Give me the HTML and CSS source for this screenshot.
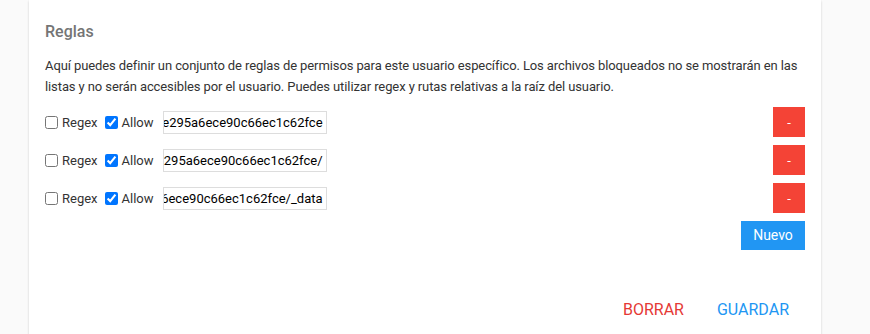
FILE: index.html
```html
<!DOCTYPE html>
<html lang="es">
<head>
<meta charset="utf-8">
<title>Reglas</title>
<link rel="stylesheet" href="styles.css">
</head>
<body>
<div class="page">
  <div class="card">
    <div class="card-content">
      <h3 class="title">Reglas</h3>
      <p class="help">Aquí puedes definir un conjunto de reglas de permisos para este usuario específico. Los archivos bloqueados no se mostrarán en las listas y no serán accesibles por el usuario. Puedes utilizar regex y rutas relativas a la raíz del usuario.</p>
      <div class="rules">
        <div class="rule">
          <input type="checkbox" class="check"><label class="lbl">Regex</label>
          <input type="checkbox" class="check" checked><label class="lbl lbl-allow">Allow</label>
          <div class="field"><span>/users/0f7a2d9b1c4e295a6ece90c66ec1c62fce</span></div>
          <button class="btn btn-red">-</button>
        </div>
        <div class="rule">
          <input type="checkbox" class="check"><label class="lbl">Regex</label>
          <input type="checkbox" class="check" checked><label class="lbl lbl-allow">Allow</label>
          <div class="field"><span>/users/0f7a2d9b1c4e295a6ece90c66ec1c62fce/</span></div>
          <button class="btn btn-red">-</button>
        </div>
        <div class="rule">
          <input type="checkbox" class="check"><label class="lbl">Regex</label>
          <input type="checkbox" class="check" checked><label class="lbl lbl-allow">Allow</label>
          <div class="field"><span>/users/0f7a2d9b1c4e295a6ece90c66ec1c62fce/_data</span></div>
          <button class="btn btn-red">-</button>
        </div>
        <div class="rule">
          <button class="btn btn-blue">Nuevo</button>
        </div>
      </div>
    </div>
    <div class="card-action">
      <button class="flat flat-red">BORRAR</button>
      <button class="flat flat-blue">GUARDAR</button>
    </div>
  </div>
</div>
</body>
</html>
```

FILE: styles.css
```css
html, body {
  margin: 0;
  padding: 0;
  background: #fafafa;
  overflow: hidden;
  height: 334px;
}
body {
  font-family: Roboto, "Liberation Sans", sans-serif;
  color: #333;
}
.page {
  padding: 0 49px 0 29px;
}
.card {
  background: #fff;
  box-shadow: 0 1px 3px rgba(0,0,0,.06), 0 1px 2px rgba(0,0,0,.12);
  min-height: 400px;
}
.card-content {
  padding: 20px 16px 16px;
}
.title {
  margin: 0;
  font-size: 16px;
  font-weight: 500;
  color: #757575;
  line-height: 24px;
}
.help {
  margin: 11px 0 0;
  font-size: 13px;
  letter-spacing: -0.1px;
  line-height: 21px;
}
.rules {
  margin-top: 10px;
  display: flex;
  flex-direction: column;
  gap: 8px;
}
.rule {
  display: flex;
  align-items: center;
  font-size: 13px;
}
.check {
  margin: 0 4px 0 0;
  width: 13px;
  height: 13px;
}
.lbl {
  margin-right: 7px;
}
.lbl-allow {
  margin-right: 9px;
}
.field {
  width: 156px;
  height: 21px;
  padding: 0 3px;
  border: 1px solid #ddd;
  display: flex;
  justify-content: flex-end;
  align-items: center;
  overflow: hidden;
  white-space: nowrap;
  color: #000;
  font-size: 13px;
}
.field span {
  flex: none;
}
.btn {
  margin-left: auto;
  border: 0;
  color: #fff;
  font-family: inherit;
  font-size: 13px;
  line-height: 15px;
  cursor: pointer;
}
.btn-red {
  background: #f44336;
  width: 32px;
  height: 30px;
  padding: 0;
}
.btn-blue {
  background: #2196f3;
  width: 64px;
  height: 29px;
  padding: 0;
  font-size: 14px;
}
.card-action {
  display: flex;
  justify-content: flex-end;
  gap: 1px;
  padding: 26px 16px;
}
.flat {
  background: transparent;
  border: 0;
  font-family: inherit;
  font-size: 16px;
  padding: 8px 16px;
  line-height: 19px;
  cursor: pointer;
}
.flat-red { color: #e53935; }
.flat-blue { color: #2196f3; }
```
